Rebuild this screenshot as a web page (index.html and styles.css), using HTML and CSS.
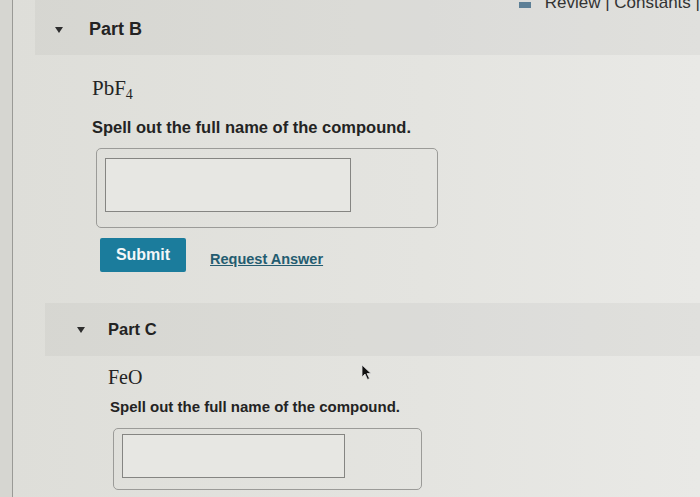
FILE: index.html
```html
<!DOCTYPE html>
<html lang="en">
<head>
    <meta charset="UTF-8">
    <title>Part B</title>
    <link rel="stylesheet" href="styles.css">
</head>
<body>
<div class="wrap">
    <div class="part part-b">
        <div class="part-head">
            <div class="toplinks"><span class="ico"></span>Review | Constants |</div>
            <div class="head-row"><em class="tri"></em><span class="title">Part B</span></div>
        </div>
        <div class="part-body">
            <p class="formula">PbF<sub>4</sub></p>
            <p class="ask">Spell out the full name of the compound.</p>
            <div class="answer"><div class="field"></div></div>
            <div class="actions">
                <button class="submit">Submit</button>
                <a class="request" href="#">Request Answer</a>
            </div>
        </div>
    </div>
    <div class="part part-c">
        <div class="part-head">
            <div class="head-row"><em class="tri"></em><span class="title">Part C</span></div>
        </div>
        <div class="part-body">
            <p class="formula">FeO</p>
            <p class="ask">Spell out the full name of the compound.</p>
            <div class="answer"><div class="field"></div></div>
        </div>
    </div>
    <svg class="cursor" width="12" height="17" viewBox="0 0 12 17">
        <path d="M1 1 L1 13 L4 10 L6.5 15.5 L8.5 14.5 L6 9.5 L10 9.5 Z" fill="#111" stroke="#ddd" stroke-width="0.8"/>
    </svg>
</div>
</body>
</html>
```

FILE: styles.css
```css
*{
    margin:0;
    padding:0;
}
body{
    background:#d6d6d1;
    font-family:"Liberation Sans",Arial,sans-serif;
    color:#232323;
    height:497px;
    overflow:hidden;
}
.wrap{
    position:relative;
    margin-left:12px;
    border-left:1px solid #9a9a96;
    min-height:497px;
    background:linear-gradient(to right,#dedeD9,#e4e4e0 60%,#e9e9e6);
}
.part-head{
    display:flex;
    flex-direction:column;
    background:rgba(0,0,0,0.035);
}
.part-b{
    margin-left:22px;
}
.part-b .part-head{
    height:55px;
}
.toplinks{
    height:10px;
    margin-top:-6px;
    text-align:right;
    font-size:17px;
    line-height:17px;
    color:#333;
    white-space:nowrap;
}
.toplinks .ico{
    display:inline-block;
    width:12px;
    height:6px;
    margin-right:14px;
    background:#5d7f96;
}
.head-row{
    flex:1;
    display:flex;
    align-items:center;
    padding-left:20px;
}
.tri{
    width:0;
    height:0;
    border-left:4.5px solid transparent;
    border-right:4.5px solid transparent;
    border-top:6px solid #2e2e2e;
}
.title{
    font-weight:bold;
    font-size:18px;
    margin-left:26px;
}
.part-b .part-body{
    padding-left:57px;
}
.formula{
    font-family:"Liberation Serif","Times New Roman",serif;
    font-size:21px;
    line-height:22px;
    margin-top:22px;
}
.formula sub{
    font-size:14px;
    line-height:0;
    vertical-align:-4px;
}
.ask{
    font-weight:bold;
    font-size:16.5px;
    line-height:20px;
    margin-top:18px;
}
.answer{
    box-sizing:border-box;
    width:342px;
    height:80px;
    margin:11px 0 0 4px;
    padding:9px 0 0 8px;
    border:1px solid #9b9b98;
    border-radius:5px;
}
.field{
    box-sizing:border-box;
    width:246px;
    height:54px;
    border:1.5px solid #858582;
    background:#e7e7e3;
}
.actions{
    display:flex;
    align-items:center;
    gap:24px;
    margin:10px 0 0 8px;
}
.submit{
    width:86px;
    height:34px;
    border:none;
    border-radius:2px;
    background:#1b7c9c;
    color:#f4f7f8;
    font-family:"Liberation Sans",Arial,sans-serif;
    font-weight:bold;
    font-size:16px;
}
.request{
    font-weight:bold;
    font-size:14.5px;
    color:#245c70;
    text-decoration:underline;
    margin-top:8px;
}
.part-c{
    margin:31px 0 0 32px;
}
.part-c .part-head{
    height:53px;
}
.part-c .head-row{
    padding-left:32px;
}
.part-c .title{
    font-size:16.5px;
    margin-left:23px;
}
.part-c .part-body{
    padding-left:63px;
}
.part-c .formula{
    font-size:20px;
    margin-top:10px;
}
.part-c .ask{
    font-size:15px;
    margin:9px 0 0 2px;
}
.part-c .answer{
    width:309px;
    height:62px;
    margin:11px 0 0 5px;
    padding:5px 0 0 8px;
}
.part-c .field{
    width:223px;
    height:44px;
}
.cursor{
    position:absolute;
    left:348px;
    top:364px;
}
```
